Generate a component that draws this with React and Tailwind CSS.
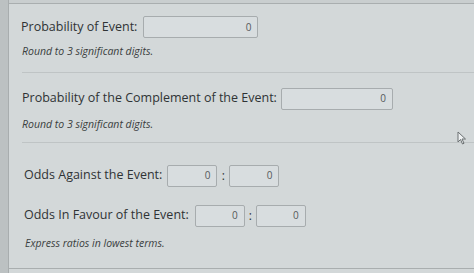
import React from 'react';

const Box = ({ w }) => (
  <div className={`${w} h-[22px] rounded-[2px] border border-[#a7acae] bg-[#d8dddf] flex items-center justify-end pr-[6px] text-[10px] text-[#55595b]`}>
    0
  </div>
);

const Hint = ({ children, cls }) => (
  <p className={`italic text-[10.5px] text-[#3a3e40] ${cls}`}>{children}</p>
);

const App = () => {
  return (
    <div
      className="w-[474px] h-[273px] overflow-hidden relative flex bg-[#d3d8d9] text-[#2f3335]"
      style={{ fontFamily: '"Open Sans", "Noto Sans", sans-serif' }}
    >
      {/* left rail */}
      <div className="w-[9px] shrink-0 bg-[#bcc1c2] border-r border-[#a8adae]" />

      <div className="flex-1 flex flex-col">
        <div className="h-[4px] shrink-0 bg-[#c9cecf] border-b border-[#a9aeaf]" />

        {/* section 1 */}
        <div className="pl-[12px] pt-[12px]">
          <div className="flex items-center gap-[6px]">
            <span className="text-[12.5px]">Probability of Event:</span>
            <Box w="w-[115px]" />
          </div>
          <Hint cls="mt-[6px] ml-[1px]">Round to 3 significant digits.</Hint>
        </div>
        <div className="ml-[13px] mt-[12px] border-t border-[#bfc4c5]" />

        {/* section 2 */}
        <div className="pl-[13px] pt-[15px]">
          <div className="flex items-center gap-[4px]">
            <span className="text-[12.5px]">Probability of the Complement of the Event:</span>
            <Box w="w-[112px]" />
          </div>
          <Hint cls="mt-[7px]">Round to 3 significant digits.</Hint>
        </div>
        <div className="ml-[13px] mt-[9px] border-t border-[#bfc4c5]" />

        {/* section 3 */}
        <div className="pl-[15px] pt-[22px]">
          <div className="flex items-center">
            <span className="text-[12.5px] mr-[5px]">Odds Against the Event:</span>
            <Box w="w-[50px]" />
            <span className="text-[12px] w-[12px] text-center">:</span>
            <Box w="w-[50px]" />
          </div>
          <div className="flex items-center mt-[18px]">
            <span className="text-[12.5px] mr-[6px]">Odds In Favour of the Event:</span>
            <Box w="w-[50px]" />
            <span className="text-[12px] w-[11px] text-center">:</span>
            <Box w="w-[50px]" />
          </div>
          <Hint cls="mt-[9px] ml-[1px]">Express ratios in lowest terms.</Hint>
        </div>
        <div className="mt-auto mb-[4px] border-t border-[#a9aeaf]" />
      </div>

      {/* mouse pointer */}
      <svg className="absolute left-[457px] top-[131px]" width="10" height="14" viewBox="0 0 10 14">
        <path d="M1 1 L1 11 L3.5 8.5 L5.5 13 L7 12.3 L5 8 L8.5 8 Z" fill="#eef1f2" stroke="#6b7072" strokeWidth="1" />
      </svg>
    </div>
  );
};

export default App;
